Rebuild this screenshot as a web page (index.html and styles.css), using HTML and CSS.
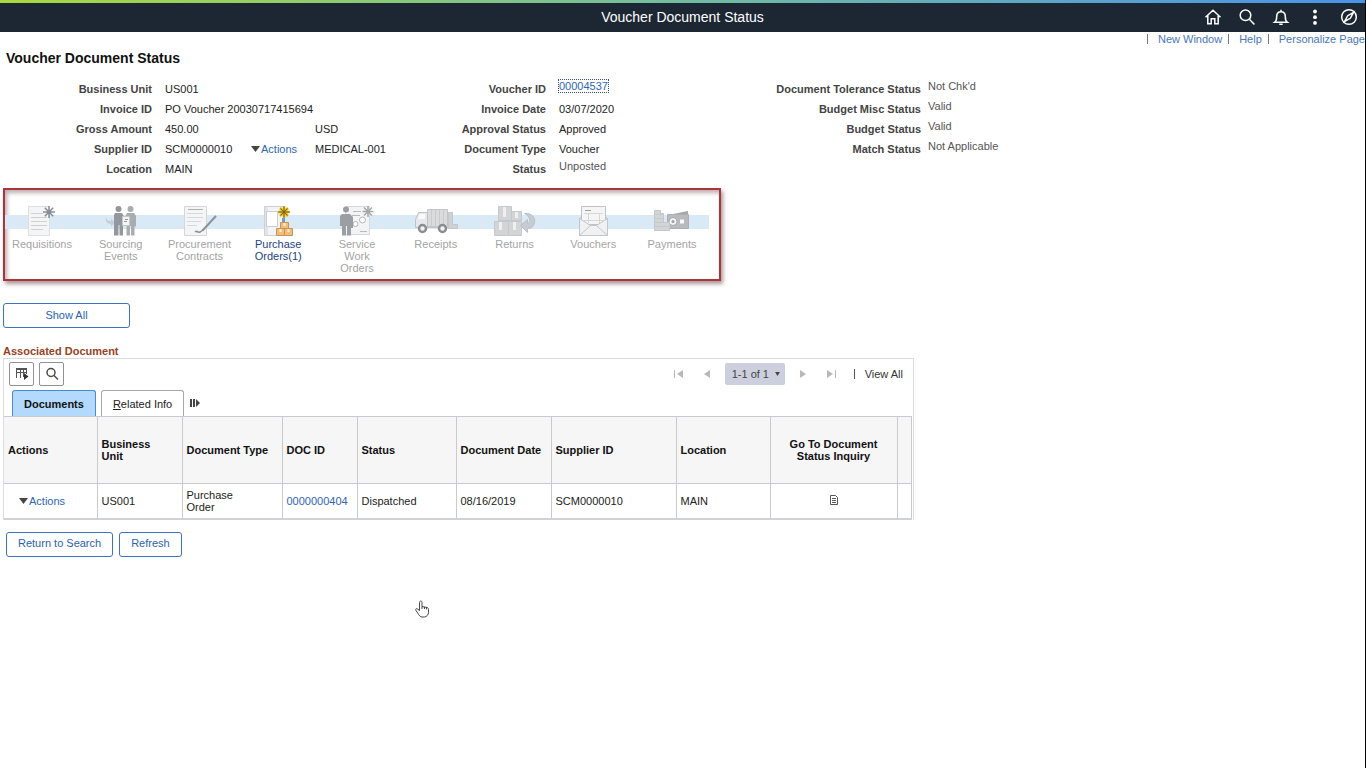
FILE: index.html
```html
<!DOCTYPE html>
<html lang="en">
<head>
  <meta charset="UTF-8" />
  <meta name="viewport" content="width=device-width, initial-scale=1.0"/>
  <title>Voucher Document Status</title>
  <link rel="stylesheet" href="styles.css">
</head>
<body>

  <header class="banner">
    <div class="banner-title">Voucher Document Status</div>
    <nav class="banner-icons">
      <button type="button" aria-label="Home">
        <svg viewBox="0 0 18 18"><path d="M1.500 9.200 9 2.200l7.500 7M3.800 7.600v8.200h3.400v-5h3.600v5h3.400V7.600"/></svg>
      </button>
      <button type="button" aria-label="Search">
        <svg viewBox="0 0 18 18"><circle cx="7.500" cy="7.200" r="5.300"/><path d="m11.400 11.200 5 5.300"/></svg>
      </button>
      <button type="button" aria-label="Notifications">
        <svg viewBox="0 0 18 18"><path d="M2.800 14.200c1.900-1.300 1.900-3.200 1.900-5.700 0-3 1.600-4.800 4.300-4.800s4.300 1.800 4.300 4.800c0 2.500 0 4.400 1.900 5.700zM9 1.700v2M7.300 16.200h3.400"/></svg>
      </button>
      <button type="button" aria-label="Actions">
        <svg viewBox="0 0 18 18"><g class="solid"><circle cx="9" cy="3.500" r="1.900"/><circle cx="9" cy="9.200" r="1.900"/><circle cx="9" cy="14.900" r="1.900"/></g></svg>
      </button>
      <button type="button" aria-label="NavBar">
        <svg viewBox="0 0 18 18"><circle cx="9" cy="9" r="7.300"/><path d="m13.500 4.500-3.200 5.800-5.800 3.200 3.200-5.800z"/></svg>
      </button>
    </nav>
  </header>

  <nav class="page-links">
    <a href="#">New Window</a>
    <a href="#">Help</a>
    <a href="#">Personalize Page</a>
  </nav>

  <main>
    <h1>Voucher Document Status</h1>

    <div class="summary">
      <dl class="fields fields-voucher">
        <dt>Business Unit</dt><dd>US001</dd>
        <dt>Invoice ID</dt><dd>PO Voucher 20030717415694</dd>
        <dt>Gross Amount</dt><dd><span class="amount">450.00</span><span>USD</span></dd>
        <dt>Supplier ID</dt>
        <dd>
          <span class="supplier">SCM0000010</span>
          <a class="actions" href="#"><svg viewBox="0 0 9 6"><path d="M0 0h9L4.500 6z"/></svg>Actions</a>
          <span>MEDICAL-001</span>
        </dd>
        <dt>Location</dt><dd>MAIN</dd>
      </dl>
      <dl class="fields fields-document">
        <dt>Voucher ID</dt><dd class="raised"><a class="focused" href="#">00004537</a></dd>
        <dt>Invoice Date</dt><dd>03/07/2020</dd>
        <dt>Approval Status</dt><dd>Approved</dd>
        <dt>Document Type</dt><dd>Voucher</dd>
        <dt>Status</dt><dd class="raised">Unposted</dd>
      </dl>
      <dl class="fields fields-status">
        <dt>Document Tolerance Status</dt><dd class="raised">Not Chk'd</dd>
        <dt>Budget Misc Status</dt><dd class="raised">Valid</dd>
        <dt>Budget Status</dt><dd class="raised">Valid</dd>
        <dt>Match Status</dt><dd class="raised">Not Applicable</dd>
      </dl>
    </div>

    <section class="flow">
      <ol class="steps">
        <li>
          <svg viewBox="0 0 44 32">
            <path fill="#f4f5f6" stroke="#dcdee1" d="M8.500 2.500h21v29h-21z"/>
            <path stroke="#cdd0d4" d="M11 9.500h12M11 13.500h16M11 17.500h16M11 21.500h16M11 25.500h12"/>
            <path stroke="#868c92" stroke-width="1.500" d="M29 2v12M23 8h12M24.800 3.800l8.400 8.400M33.200 3.800l-8.400 8.400"/>
          </svg>
          Requisitions
        </li>
        <li>
          <svg viewBox="0 0 44 32">
            <path fill="#c3ced8" d="M7 12c0 4 2 5 5 5v-2.500l4 4-4 4V20c-4 0-6-3-5-8z"/>
            <circle cx="19.500" cy="5" r="3" fill="#94989c"/>
            <path fill="#94989c" d="M16 9h7l3 5v5l-2-2v14.500h-3.500V21h-1v10.500H15V11z"/>
            <circle cx="31.500" cy="5" r="3" fill="#a9adb0"/>
            <path fill="#a9adb0" d="M28 9h7l2 3v10l-1.500 1v8.500H32V22h-1v9.500h-3.500V17l-2 1v-4z"/>
            <path fill="#f3f4f5" stroke="#c5c9cc" d="M23.500 12.500h7v9h-7z"/>
            <path stroke="#999" d="M26 15.500h3M25 17.500h3"/>
          </svg>
          Sourcing Events
        </li>
        <li>
          <svg viewBox="0 0 44 32">
            <path fill="#f4f5f6" stroke="#d4d6da" d="M6.500 2.500h22v29h-22z"/>
            <path stroke="#adb1b5" d="M10 5.500h15"/>
            <path stroke="#d6d9dc" d="M9 9.500h16M9 13.500h16M9 17.500h14M9 21.500h10"/>
            <path stroke="#8b929a" stroke-width="2" d="M38 12 24.500 26.500"/>
            <path stroke="#8b929a" stroke-width="1.500" d="M17 28c2-2 3 1 5 0l3-2"/>
          </svg>
          Procurement Contracts
        </li>
        <li class="current">
          <svg viewBox="0 0 44 32">
            <path fill="#f3f4f7" stroke="#cdd0d5" d="M8.500 2.500h19v29h-19z"/>
            <path fill="#e2e4e9" d="M9 3h3v28H9z"/>
            <path fill="#fff" stroke="#c9ccd2" d="M10.500 7.500h11v15h-11z"/>
            <path stroke="#6fa0d0" stroke-width="3" d="M27.500 14v4"/>
            <path stroke="#e7b91b" stroke-width="2.500" d="M28 2v12M22 8h12M24 4l8 8M32 4l-8 8"/>
            <path stroke="#776122" d="M28 2.500v11M22.500 8h11M24.500 4.500l7 7M31.500 4.500l-7 7"/>
            <path fill="#efbd7c" stroke="#d0924a" d="M24.500 18.500h8v6h-8zM20.500 24.500h8v7h-8zM28.500 24.500h8v7h-8z"/>
            <path stroke="#fff2dc" stroke-width="2" d="M28.500 19v3M24.500 25v3M32.500 25v3"/>
          </svg>
          Purchase Orders(1)
        </li>
        <li>
          <svg viewBox="0 0 44 32">
            <path fill="#f3f4f5" stroke="#d6d9db" d="M10.500 2.500h24v28h-24z"/>
            <path stroke="#b5babd" d="M18 7.500h8M17 11.500h8M25 27.500h7"/>
            <circle cx="20.500" cy="20" r="2.500" fill="#fff" stroke="#b5b9bd"/>
            <circle cx="27.500" cy="16" r="3" fill="#fff" stroke="#b5b9bd"/>
            <circle cx="11" cy="5.500" r="3" fill="#9b9fa3"/>
            <path fill="#9b9fa3" d="M7 10h8l3 3v11h-2v7.500h-4V22h-1v9.500H7V22H5V12z"/>
            <path stroke="#a3a8ad" stroke-width="1.500" d="M33 2v11M27.500 7.500h11M29 3.500l8 8M37 3.500l-8 8"/>
          </svg>
          Service<br>Work<br>Orders
        </li>
        <li>
          <svg viewBox="0 0 44 32">
            <path fill="#d9dbdd" stroke="#c2c5c7" d="M13.500 5.500h20v17h-20z"/>
            <path stroke="#c8cbcd" d="M17.500 6v16M21.500 6v16M25.500 6v16M29.500 6v16"/>
            <path fill="#e7e8e9" stroke="#bfc2c4" d="M1.500 23.500v-8l3-7h9v15z"/>
            <path fill="#f9fafb" d="m4 15 2-5h5v5z"/>
            <path fill="#cfd2d4" stroke="#c4c7ca" d="M34.500 8.500h4v12h5v4h-9zM13 23.500h22"/>
            <circle cx="8.500" cy="24.500" r="3.500" fill="#f2f2f2" stroke="#8b8e91" stroke-width="2.500"/>
            <circle cx="28.500" cy="24.500" r="3.500" fill="#f2f2f2" stroke="#8b8e91" stroke-width="2.500"/>
          </svg>
          Receipts
        </li>
        <li>
          <svg viewBox="0 0 44 32">
            <path fill="#d2d4d6" stroke="#c6c9cb" d="M5.500 2.500h13v14h-13zM18.500 7.500h10v9h-10zM1.500 17.500h14v14h-14zM15.500 17.500h13v14h-13z"/>
            <path fill="#eeeff0" d="M10 3h3v10h-3zM22 8h3v6h-3zM6 18h3v8H6zM20 18h3v8h-3z"/>
            <path fill="#c6ccd1" stroke="#b9c0c5" d="M31.500 9.500c8-1 11 5 10 9-1 5-4 6-7 6v4l-7-7 7-6v4c4-1 3-7-3-10z"/>
          </svg>
          Returns
        </li>
        <li>
          <svg viewBox="0 0 44 32">
            <path fill="#d5d7d9" stroke="#c2c6c9" d="M8.500 14.500 12 11h21l3.500 3.500v17h-28z"/>
            <path fill="#f5f5f6" stroke="#bfc3c6" d="M10.500 2.500h24v18h-24z"/>
            <path stroke="#9da1a5" d="M14 6.500h6"/>
            <path stroke="#d8d6d6" d="M13 9.500h19M13 16.500h19M17.500 9v10M28.500 9v10"/>
            <path fill="#f0f1f3" stroke="#c2c6c9" d="M8.500 14.500v17h28v-17l-11 7h-6zM8.500 31.500l11-10M36.500 31.500l-11-10"/>
          </svg>
          Vouchers
        </li>
        <li>
          <svg viewBox="0 0 44 32">
            <path fill="#a5a8ab" d="m18 11 20-4v4z"/>
            <path fill="#b8babd" stroke="#aeb1b4" d="M17.500 10.500h21v14h-21z"/>
            <circle cx="23" cy="17.500" r="4" fill="#f5f5f5" stroke="#a5a8ab"/>
            <circle cx="23" cy="17.500" r="1.500" fill="#9da0a3"/>
            <path fill="#fafafa" d="M30 15.500h4v4h-4z"/>
            <path fill="#d2d4d6" stroke="#c6c9cb" d="M4.500 6.500h6v3h3v9h6v8h-15z"/>
            <path stroke="#c6c9cb" d="M5 10.500h8M5 14.500h8M5 18.500h14M5 22.500h14"/>
          </svg>
          Payments
        </li>
      </ol>
    </section>

    <button type="button" class="btn btn-wide">Show All</button>

    <section class="associated">
      <h2>Associated Document</h2>
      <div class="grid">
        <div class="toolbar">
          <button type="button" class="tool" aria-label="Grid actions">
            <svg viewBox="0 0 16 16"><path fill="none" stroke="#555" d="M2.500 12v-9h10v5M6.500 4v8M9.500 4v7M2 6.500h11"/><path fill="#555" d="M2 2h11v2H2z"/><path fill="#333" d="m10 7 4.500 3.500L10 14z"/></svg>
          </button>
          <button type="button" class="tool" aria-label="Find">
            <svg viewBox="0 0 16 16"><g fill="none" stroke="#4a4a4a" stroke-width="1.500"><circle cx="7" cy="6.500" r="4"/><path d="m10 9.500 4 4"/></g></svg>
          </button>
          <div class="pager">
            <button type="button" aria-label="First"><svg viewBox="0 0 10 10"><path d="M0 1h1v8H0zM9 1v8L3 5z"/></svg></button>
            <button type="button" aria-label="Previous"><svg viewBox="0 0 10 10"><path d="M8 1v8L2 5z"/></svg></button>
            <label class="range">
              <select aria-label="Rows shown"><option>1-1 of 1</option></select>
              <svg viewBox="0 0 6 5"><path d="M0 0h6L3 5z"/></svg>
            </label>
            <button type="button" aria-label="Next"><svg viewBox="0 0 10 10"><path d="M2 1v8l6-4z"/></svg></button>
            <button type="button" aria-label="Last"><svg viewBox="0 0 10 10"><path d="M1 1v8l6-4zM9 1h1v8H9z"/></svg></button>
            <a class="view-all" href="#">View All</a>
          </div>
        </div>

        <div class="tabs">
          <button type="button" class="tab selected">Documents</button>
          <button type="button" class="tab"><u>R</u>elated Info</button>
          <button type="button" class="show-columns" aria-label="Show all columns">
            <svg viewBox="0 0 10 10"><path d="M0 1h2v8H0zM3 1h2v8H3zM6 1l4 4-4 4z"/></svg>
          </button>
        </div>

        <table>
          <thead>
            <tr>
              <th class="col-actions">Actions</th>
              <th class="col-unit">Business Unit</th>
              <th class="col-type">Document Type</th>
              <th class="col-doc">DOC ID</th>
              <th class="col-status">Status</th>
              <th class="col-date">Document Date</th>
              <th class="col-supplier">Supplier ID</th>
              <th class="col-location">Location</th>
              <th class="col-goto">Go To Document Status Inquiry</th>
              <th class="col-end"></th>
            </tr>
          </thead>
          <tbody>
            <tr>
              <td class="col-actions"><a class="actions" href="#"><svg viewBox="0 0 9 6"><path d="M0 0h9L4.500 6z"/></svg>Actions</a></td>
              <td>US001</td>
              <td class="col-type">Purchase Order</td>
              <td><a href="#">0000000404</a></td>
              <td>Dispatched</td>
              <td>08/16/2019</td>
              <td>SCM0000010</td>
              <td>MAIN</td>
              <td class="col-goto">
                <a href="#" aria-label="Document status inquiry">
                  <svg class="doc-icon" viewBox="0 0 10 11"><path fill="none" stroke="#555" d="M1.500.5h5l2 2v7h-7zM3 3.500h4M3 5.500h4M3 7.500h4"/></svg>
                </a>
              </td>
              <td class="col-end"></td>
            </tr>
          </tbody>
        </table>
      </div>
    </section>

    <div class="footer-buttons">
      <button type="button" class="btn">Return to Search</button>
      <button type="button" class="btn">Refresh</button>
    </div>
  </main>

  <svg class="pointer" viewBox="0 0 14 18"><path fill="#fff" stroke="#444" d="M4.500 10.500v-8c0-2 2.500-2 2.500 0v4l5 1c1 0 1.500 1 1.500 2v3c0 2-2 4.500-4 4.500H7c-2 0-3-2-4-3.500l-2-3c-1-1.500.5-2.500 1.500-1.500z"/><path stroke="#444" fill="none" d="M7 6.500v2.500M9.500 7v2M11.500 7.500v2"/></svg>

</body>
</html>
```
FILE: styles.css
```css
* { box-sizing: border-box; }

body {
  font-family: "Liberation Sans", Arial, sans-serif;
  font-size: 11px;
  line-height: 12px;
  color: #222;
  background: #fff;
  margin: 0;
  min-height: 100vh;
  border-right: 1px solid #000;
}

a {
  color: #2f65b5;
  text-decoration: none;
}

button {
  font: inherit;
  cursor: pointer;
}

svg {
  display: block;
  fill: none;
}

/* Banner */
.banner {
  position: relative;
  display: flex;
  align-items: center;
  justify-content: center;
  height: 32px;
  padding-top: 2px;
  background: linear-gradient(90deg, #a9d93f, #72bda0 50%, #4a93ea) 0 0 / 100% 3px no-repeat, #1c2733;
}

.banner-title {
  color: #fff;
  font-size: 14px;
  line-height: 16px;
}

.banner-icons {
  position: absolute;
  right: 7px;
  top: 8px;
  display: flex;
  gap: 16px;
}

.banner-icons button {
  padding: 0;
  border: 0;
  background: none;
}

.banner-icons svg {
  width: 18px;
  height: 18px;
  stroke: #fff;
  stroke-width: 1.5;
}

.banner-icons .solid {
  fill: #fff;
  stroke: none;
}

.page-links {
  display: flex;
  justify-content: flex-end;
  padding-top: 1px;
}

.page-links a {
  display: flex;
  align-items: center;
  color: #4a76bd;
}

.page-links a::before {
  content: "";
  height: 10px;
  border-left: 1px solid #777;
  margin: 0 10px 0 6px;
}

/* Voucher summary */
h1 {
  font-size: 14px;
  line-height: 16px;
  color: #111;
  margin: 5px 0 13px 6px;
}

.summary {
  display: flex;
}

.fields {
  display: grid;
  grid-auto-rows: 20px;
  column-gap: 13px;
  align-items: center;
  align-content: start;
  margin: 0;
}

.fields-voucher { grid-template-columns: 152px 235px; }
.fields-document { grid-template-columns: 146px 200px; }
.fields-status { grid-template-columns: 162px 1fr; column-gap: 7px; }

.fields dt {
  text-align: right;
  font-weight: bold;
  color: #444;
}

.fields dd {
  display: flex;
  align-items: center;
  margin: 0;
}

.fields .raised {
  align-self: start;
  color: #555;
  padding-top: 1px;
}

.amount { width: 150px; }
.supplier { width: 86px; }

.actions {
  display: inline-flex;
  align-items: center;
  gap: 1px;
}

.fields .actions { width: 64px; }

.actions svg {
  width: 9px;
  height: 6px;
  fill: #444;
}

.focused { outline: 1px dotted #3b4a8f; }

/* Procure-to-pay flow */
.flow {
  max-width: 718px;
  height: 93px;
  margin: 9px 0 22px 3px;
  padding-top: 14px;
  border: 2px solid #a8363c;
  box-shadow: 2px 3px 4px rgba(90, 50, 50, 0.5), inset 2px 3px 4px rgba(90, 50, 50, 0.4);
}

.steps {
  display: flex;
  justify-content: space-between;
  list-style: none;
  margin: 0 10px 0 0;
  padding: 0;
  background: linear-gradient(#d9e9f5, #d9e9f5) 0 11px / 100% 14px no-repeat;
}

.steps li {
  width: 74px;
  padding: 0 3px;
  text-align: center;
  color: #a4a4a4;
}

.steps svg {
  width: 44px;
  height: 32px;
  margin: 0 auto 2px;
}

.steps .current { color: #1f4382; }

/* Buttons */
.btn {
  height: 25px;
  padding: 0 11px 2px;
  color: #2a62b0;
  background: #fff;
  border: 1px solid #3d73bb;
  border-radius: 3px;
}

.btn-wide {
  width: 127px;
  margin-left: 3px;
}

.footer-buttons {
  display: flex;
  gap: 6px;
  margin: 12px 6px;
}

/* Associated documents grid */
.associated {
  max-width: 911px;
  margin: 16px 0 0 3px;
}

h2 {
  font-size: 11px;
  line-height: 14px;
  color: #96431f;
  margin: 0;
}

.grid {
  border: 1px solid #dcdcde;
  border-bottom: 0;
  padding-right: 1px;
}

.toolbar {
  display: flex;
  align-items: center;
  gap: 5px;
  padding: 3px 9px 4px 5px;
}

.tool {
  width: 25px;
  height: 24px;
  padding: 0 4px;
  background: #fff;
  border: 1px solid #8f9296;
  border-radius: 2px;
}

.tool svg {
  width: 16px;
  height: 16px;
}

.pager {
  display: flex;
  align-items: center;
  margin-left: auto;
}

.pager button {
  padding: 0;
  width: 10px;
  margin-right: 18px;
  border: 0;
  background: none;
}

.pager button svg {
  width: 10px;
  height: 10px;
  fill: #b8b8b8;
}

.range {
  position: relative;
  margin: 0 13px 0 -5px;
}

.range select {
  appearance: none;
  width: 60px;
  height: 22px;
  padding: 0 7px;
  border: 0;
  border-radius: 2px;
  font: inherit;
  color: #444;
  background: #cccfdd;
}

.range svg {
  position: absolute;
  right: 5px;
  top: 9px;
  width: 5px;
  height: 4px;
  fill: #444;
}

.view-all {
  color: #333;
  border-left: 1px solid #555;
  padding-left: 10px;
  line-height: 10px;
}

.tabs {
  display: flex;
  align-items: center;
  gap: 5px;
  padding-left: 8px;
}

.tab {
  height: 26px;
  padding: 0 11px;
  color: #222;
  background: #fff;
  border: 1px solid #a5a7ab;
  border-bottom: 0;
  border-radius: 3px 3px 0 0;
}

.tab.selected {
  font-weight: bold;
  color: #111;
  background: #b3dafc;
  border-color: #4a8bd0;
}

.show-columns {
  padding: 0;
  margin-left: 1px;
  border: 0;
  background: none;
}

.show-columns svg {
  width: 10px;
  height: 10px;
  fill: #444;
}

table {
  width: 100%;
  table-layout: fixed;
  border-collapse: collapse;
  border: 1px solid #c9cacd;
  border-left: 0;
  border-bottom: 2px solid #d0d1d3;
}

th, td {
  padding: 0 4px;
  text-align: left;
  border-left: 1px solid #c9cacd;
}

th {
  height: 67px;
  color: #111;
  background: #f6f6f7;
  border-bottom: 1px solid #c9cacd;
}

td { height: 35px; }

td .actions { vertical-align: top; }

th:first-child, td:first-child { border-left: 0; }
td.col-actions { padding-left: 15px; }

.col-actions { width: 93px; }
.col-unit { width: 85px; padding-right: 24px; }
.col-type { width: 100px; }
td.col-type { padding-right: 40px; }
.col-doc { width: 75px; }
.col-status { width: 99px; }
.col-date { width: 95px; }
.col-supplier { width: 125px; }
.col-location { width: 94px; }
.col-goto { width: 127px; padding: 0 16px; text-align: center; }

.doc-icon {
  width: 10px;
  height: 11px;
  margin: 0 auto;
}

/* Hand pointer over the page */
.pointer {
  position: absolute;
  left: 415px;
  top: 600px;
  width: 14px;
  height: 18px;
}
```
